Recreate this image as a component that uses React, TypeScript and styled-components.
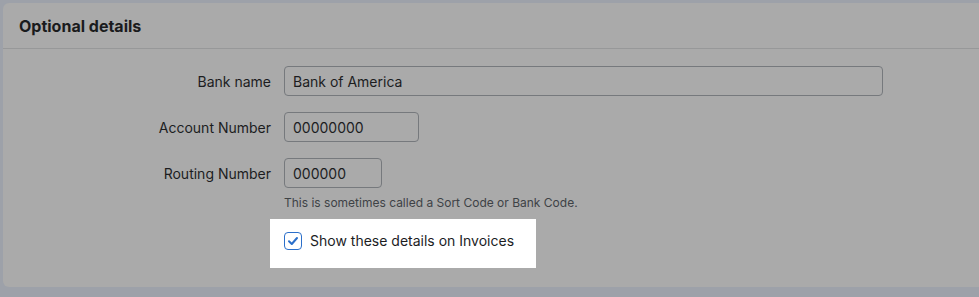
import * as React from 'react';
import styled, { createGlobalStyle } from 'styled-components';

const GlobalStyle = createGlobalStyle`
  html, body {
    margin: 0;
    padding: 0;
    background: #9da1a9;
  }
  body {
    font-family: Inter, "Noto Sans", sans-serif;
    color: #1c1d1f;
  }
`;

const Page = styled.div`
  padding: 3px 0 0 3px;
  height: 297px;
  box-sizing: border-box;
  overflow: hidden;
`;

const Card = styled.section`
  background: #aaaaaa;
  border-radius: 6px 0 0 6px;
  height: 284px;
  box-sizing: border-box;
`;

const CardHeader = styled.header`
  height: 46px;
  display: flex;
  align-items: center;
  padding: 0 16px;
  border-bottom: 1px solid #979899;
  box-sizing: border-box;
`;

const Title = styled.h2`
  margin: 0;
  font-size: 16px;
  font-weight: 700;
  color: #1a1b1d;
`;

const Form = styled.div`
  display: grid;
  grid-template-columns: 268px auto;
  column-gap: 13px;
  row-gap: 16px;
  padding-top: 17px;
  align-items: center;
`;

const Label = styled.label<{ $top?: boolean }>`
  text-align: right;
  font-size: 14px;
  color: #1c1d1f;
  align-self: ${(p) => (p.$top ? 'start' : 'center')};
  padding-top: ${(p) => (p.$top ? '7px' : '0')};
`;

const Field = styled.div`
  display: flex;
  flex-direction: column;
  align-items: flex-start;
`;

const Input = styled.input<{ $width: number }>`
  width: ${(p) => p.$width}px;
  height: 30px;
  box-sizing: border-box;
  border: 1px solid #76797d;
  border-radius: 4px;
  background: transparent;
  padding: 0 8px;
  font-family: inherit;
  font-size: 14px;
  color: #1c1d1f;
  outline: none;
`;

const Help = styled.div`
  margin-top: 7px;
  font-size: 12px;
  color: #3e4246;
`;

const Highlight = styled.label`
  grid-column: 2;
  justify-self: start;
  margin-left: -14px;
  margin-top: -7px;
  display: flex;
  align-items: center;
  gap: 8px;
  background: #ffffff;
  padding: 13px 22px 18px 14px;
  font-size: 14px;
  color: #1c1d1f;
  line-height: 18px;
`;

const CheckBox = styled.span`
  width: 18px;
  height: 18px;
  box-sizing: border-box;
  border: 1.5px solid #2b6fca;
  border-radius: 4px;
  display: flex;
  align-items: center;
  justify-content: center;
`;

export default function App() {
  return (
    <>
      <GlobalStyle />
      <Page>
        <Card>
          <CardHeader>
            <Title>Optional details</Title>
          </CardHeader>
          <Form>
            <Label>Bank name</Label>
            <Field>
              <Input $width={599} defaultValue="Bank of America" />
            </Field>
            <Label>Account Number</Label>
            <Field>
              <Input $width={135} defaultValue="00000000" />
            </Field>
            <Label $top>Routing Number</Label>
            <Field>
              <Input $width={98} defaultValue="000000" />
              <Help>This is sometimes called a Sort Code or Bank Code.</Help>
            </Field>
            <Highlight>
              <CheckBox>
                <svg width="12" height="12" viewBox="0 0 12 12" fill="none">
                  <path d="M2 6.3 L4.8 9 L10 3" stroke="#2b6fca" strokeWidth="2" strokeLinecap="round" strokeLinejoin="round" />
                </svg>
              </CheckBox>
              Show these details on Invoices
            </Highlight>
          </Form>
        </Card>
      </Page>
    </>
  );
}
